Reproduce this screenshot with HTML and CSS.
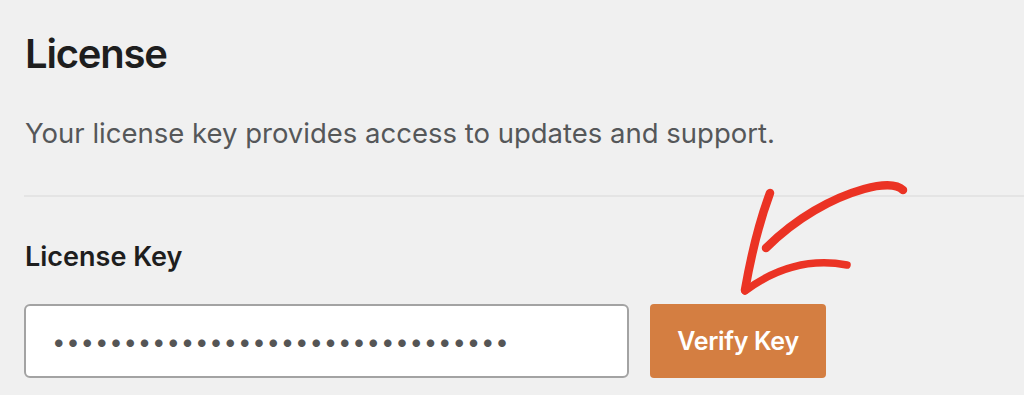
FILE: index.html
```html
<!DOCTYPE html>
<html lang="en">
<head>
    <meta charset="UTF-8">
    <meta name="viewport" content="width=device-width, initial-scale=1.0">
    <title>License</title>
    <link rel="stylesheet" href="styles.css">
</head>
<body>
    <div class="page">
        <h1 class="title">License</h1>
        <p class="desc">Your license key provides access to updates and support.</p>
        <div class="divider"></div>
        <label class="label" for="key">License Key</label>
        <div class="row">
            <input id="key" class="key-input" type="password" value="abcdefghijklmnopqrstuvwxyz012345">
            <button class="verify-btn">Verify Key</button>
        </div>
    </div>
    <!-- hand drawn arrow pointing at the button -->
    <svg class="arrow" width="1024" height="395" viewBox="0 0 1024 395">
        <path class="thick" d="M903 190 C 897 184, 882 184, 864 189 C 832 198, 796 218, 766 248" />
        <path class="thick" d="M770 193 C 760 220, 752 250, 745 290" />
        <path d="M847 265 C 815 259, 780 265, 745 291" />
    </svg>
</body>
</html>
```

FILE: styles.css
```css
body{
    margin: 0;
    background: #f0f0f0;
    font-family: Inter, "Noto Sans", sans-serif;
}
.page{
    padding: 30px 0 0 24px;
}
.title{
    margin: 0;
    font-size: 40px;
    line-height: 48px;
    font-weight: 600;
    letter-spacing: -1.2px;
    color: #1e1e1e;
    padding-left: 1px;
}
.desc{
    margin: 39px 0 0;
    font-size: 27.5px;
    line-height: 32px;
    color: #555759;
    padding-left: 1px;
}
.divider{
    margin-top: 46px;
    height: 2px;
    background: #e4e4e4;
}
.label{
    display: block;
    margin-top: 44px;
    font-size: 27px;
    line-height: 32px;
    font-weight: 600;
    color: #1e1e1e;
    padding-left: 1px;
}
.row{
    display: flex;
    gap: 21px;
    margin-top: 31px;
}
.key-input{
    box-sizing: border-box;
    width: 605px;
    height: 74px;
    margin: 0;
    padding: 0 0 0 26px;
    border: 2px solid #a3a3a3;
    border-radius: 6px;
    background: #fff;
    font-family: Inter, sans-serif;
    font-size: 24px;
    letter-spacing: 0.8px;
    color: #555;
    outline: none;
}
.verify-btn{
    width: 176px;
    height: 74px;
    margin: 0;
    border: none;
    border-radius: 4px;
    background: #d47e41;
    color: #fff;
    font-family: Inter, sans-serif;
    font-size: 25px;
    font-weight: 600;
    letter-spacing: -0.3px;
}
.arrow{
    position: absolute;
    left: 0;
    top: 0;
    pointer-events: none;
}
.arrow path{
    fill: none;
    stroke: #eb3324;
    stroke-width: 7.5;
    stroke-linecap: round;
    stroke-linejoin: round;
}
.arrow .thick{
    stroke-width: 8.5;
}
```
